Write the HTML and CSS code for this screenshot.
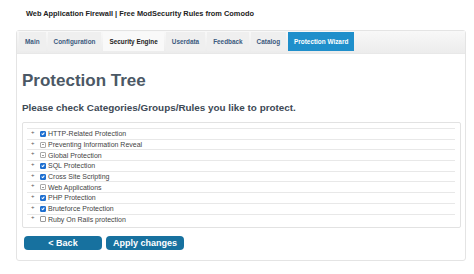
FILE: index.html
```html
<!DOCTYPE html>
<html lang="en">
<head>
    <meta charset="UTF-8">
    <title>Protection Wizard</title>
    <link rel="stylesheet" href="styles.css">
</head>
<body>
    <div class="site-title">Web Application Firewall | Free ModSecurity Rules from Comodo</div>

    <div class="panel">
        <ul class="tabs">
            <li>Main</li>
            <li>Configuration</li>
            <li class="light">Security Engine</li>
            <li>Userdata</li>
            <li>Feedback</li>
            <li>Catalog</li>
            <li class="active">Protection Wizard</li>
        </ul>

        <div class="content">
            <h1>Protection Tree</h1>
            <h2>Please check Categories/Groups/Rules you like to protect.</h2>

            <div class="tree">
                <div class="node"><span class="expand">+</span><span class="box checked"></span>HTTP-Related Protection</div>
                <div class="node"><span class="expand">+</span><span class="box partial"></span>Preventing Information Reveal</div>
                <div class="node"><span class="expand">+</span><span class="box partial"></span>Global Protection</div>
                <div class="node"><span class="expand">+</span><span class="box checked"></span>SQL Protection</div>
                <div class="node"><span class="expand">+</span><span class="box checked"></span>Cross Site Scripting</div>
                <div class="node"><span class="expand">+</span><span class="box partial"></span>Web Applications</div>
                <div class="node"><span class="expand">+</span><span class="box checked"></span>PHP Protection</div>
                <div class="node"><span class="expand">+</span><span class="box checked"></span>Bruteforce Protection</div>
                <div class="node"><span class="expand">+</span><span class="box"></span>Ruby On Rails protection</div>
            </div>

            <div class="actions">
                <button class="btn">&lt; Back</button>
                <button class="btn">Apply changes</button>
            </div>
        </div>
    </div>
</body>
</html>
```

FILE: styles.css
```css
body {
    margin: 0;
    background: #fff;
    font-family: 'Liberation Sans', Arial, sans-serif;
    color: #333;
}
.site-title {
    padding: 8px 0 0 26px;
    height: 12px;
    line-height: 12px;
    font-size: 7.4px;
    font-weight: bold;
    color: #222;
}
.panel {
    margin: 10px 8px 0 16px;
    height: 229px;
    border: 1px solid #e4e4e4;
    border-radius: 3px;
}
.tabs {
    display: flex;
    gap: 2px;
    list-style: none;
    margin: 0;
    padding: 1px 2px 0;
    height: 21px;
    background: linear-gradient(#f8f8f8, #ececec);
    border-bottom: 1px solid #e8e8e8;
}
.tabs li {
    padding: 0 6px;
    height: 19px;
    line-height: 19px;
    font-size: 6.4px;
    font-weight: bold;
    color: #3b5a7e;
    background: #efefef;
}
.tabs li.light {
    background: #f9f9f9;
    color: #222;
}
.tabs li.active {
    background: #1f8fcb;
    color: #fff;
}
.content {
    padding: 0 4px 0 5px;
}
h1 {
    margin: 16px 0 0;
    font-size: 17px;
    line-height: 22px;
    color: #4b5865;
}
h2 {
    margin: 9px 0 0;
    font-size: 9.9px;
    line-height: 13px;
    color: #3d4955;
}
.tree {
    margin-top: 8px;
    padding: 5px 5px 3px 4px;
    border: 1px solid #e2e2e2;
    border-radius: 2px;
}
.node {
    display: flex;
    align-items: center;
    height: 9.7px;
    border-top: 1px solid #e8e8e8;
    font-size: 7px;
    color: #444;
}
.expand {
    width: 5px;
    margin: 0 4px 0 4px;
    font-size: 6px;
    color: #555;
    position: relative;
    top: -2px;
}
.box {
    box-sizing: border-box;
    width: 6px;
    height: 6px;
    margin-right: 2px;
    border: 1px solid #999;
    border-radius: 1px;
    background: #fff;
    position: relative;
}
.box.checked {
    background: #1e6fd0;
    border-color: #1e6fd0;
}
.box.checked::after {
    content: '';
    position: absolute;
    left: 1px;
    top: 0;
    width: 1px;
    height: 2px;
    border: solid #fff;
    border-width: 0 1px 1px 0;
    transform: rotate(40deg);
}
.box.partial {
    border-color: #aaa;
}
.box.partial::after {
    content: '';
    position: absolute;
    left: 1px;
    right: 1px;
    top: 1.5px;
    height: 1px;
    background: #999;
}
.actions {
    display: flex;
    gap: 4px;
    margin: 8px 0 0 2px;
}
.btn {
    width: 78px;
    height: 14px;
    padding: 0;
    border: none;
    border-radius: 4px;
    background: #17719f;
    color: #fff;
    font-family: 'Liberation Sans', Arial, sans-serif;
    font-size: 9px;
    font-weight: bold;
}
```
